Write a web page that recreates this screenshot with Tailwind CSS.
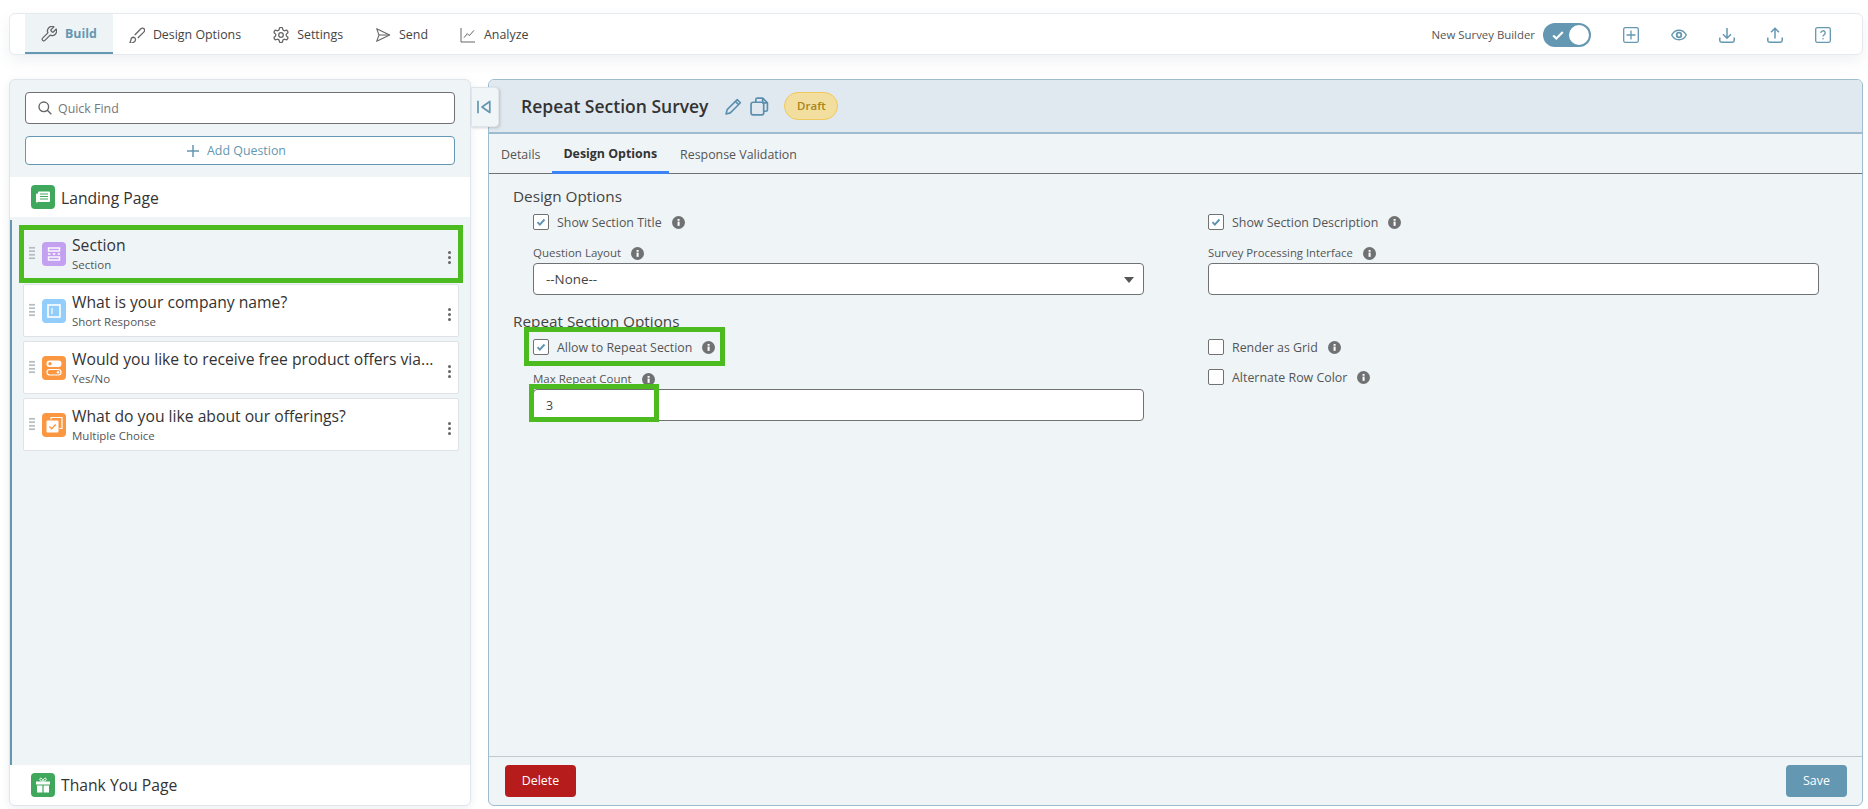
<!DOCTYPE html>
<html lang="en">
<head>
    <meta charset="UTF-8">
    <meta name="viewport" content="width=device-width, initial-scale=1.0">
    <title>Repeat Section Survey</title>
    <script src="https://cdn.jsdelivr.net/npm/@tailwindcss/browser@4"></script>
</head>
<body class="h-[809px] overflow-hidden bg-white font-['Open_Sans',sans-serif] text-[#333]">

    <!-- Shared icons -->
    <svg class="hidden">
        <symbol id="info" viewBox="0 0 14 14">
            <circle cx="7" cy="7" r="7" fill="#6f7173"/>
            <rect x="6" y="6" width="2.2" height="4.6" fill="#fff"/>
            <rect x="6" y="3.2" width="2.2" height="1.9" fill="#fff"/>
        </symbol>
        <symbol id="check" viewBox="0 0 14 14">
            <path d="M3.5 7.2l2.300 2.400L10.500 4.500" fill="none" stroke="#5c93b3" stroke-width="1.900"/>
        </symbol>
    </svg>

    <!-- Top bar -->
    <header class="mt-[13px] ml-[9px] mr-[5px] h-[42px] flex items-stretch rounded-md border border-[#e6e9ee] bg-white pl-[15px] pr-[31px] shadow-[0_6px_14px_rgba(100,116,139,0.10)]">
        <nav class="flex items-stretch text-[12.4px] text-[#444]">
            <a class="flex items-center gap-2 px-4 pt-[2px] border-b-2 border-[#6497b1] bg-[#eef3f6] font-bold text-[#6497b1]">
                <svg class="w-4 h-4" viewBox="1.500 1.500 21 21" fill="none" stroke="#666" stroke-width="1.700" stroke-linejoin="round"><path d="M14.7 6.3a1 1 0 0 0 0 1.4l1.6 1.6a1 1 0 0 0 1.4 0l3.77-3.77a6 6 0 0 1-7.94 7.94l-6.91 6.91a2.12 2.12 0 0 1-3-3l6.91-6.91a6 6 0 0 1 7.94-7.94l-3.76 3.76z"/></svg>
                Build
            </a>
            <a class="flex items-center gap-2 px-4 pt-[2px]">
                <svg class="w-4 h-4" viewBox="1.500 1.500 21 21" fill="none" stroke="#666" stroke-width="1.700" stroke-linejoin="round"><path d="m9.06 11.9 8.07-8.06a2.85 2.85 0 1 1 4.03 4.03l-8.06 8.08"/><path d="M7.07 14.94c-1.66 0-3 1.35-3 3.02 0 1.33-1 3-1.5 5 2 0 7.5-1 7.5-5a3.01 3.01 0 0 0-3-3.02z"/></svg>
                Design Options
            </a>
            <a class="flex items-center gap-2 px-4 pt-[2px]">
                <svg class="w-4 h-4" viewBox="1.500 1.500 21 21" fill="none" stroke="#666" stroke-width="1.700" stroke-linejoin="round"><path d="M12.22 2h-.44a2 2 0 0 0-2 2v.18a2 2 0 0 1-1 1.73l-.43.25a2 2 0 0 1-2 0l-.15-.08a2 2 0 0 0-2.73.73l-.22.38a2 2 0 0 0 .73 2.73l.15.1a2 2 0 0 1 1 1.72v.51a2 2 0 0 1-1 1.74l-.15.09a2 2 0 0 0-.73 2.73l.22.38a2 2 0 0 0 2.73.73l.15-.08a2 2 0 0 1 2 0l.43.25a2 2 0 0 1 1 1.73V20a2 2 0 0 0 2 2h.44a2 2 0 0 0 2-2v-.18a2 2 0 0 1 1-1.73l.43-.25a2 2 0 0 1 2 0l.15.08a2 2 0 0 0 2.73-.73l.22-.39a2 2 0 0 0-.73-2.73l-.15-.08a2 2 0 0 1-1-1.74v-.5a2 2 0 0 1 1-1.74l.15-.09a2 2 0 0 0 .73-2.73l-.22-.38a2 2 0 0 0-2.73-.73l-.15.08a2 2 0 0 1-2 0l-.43-.25a2 2 0 0 1-1-1.73V4a2 2 0 0 0-2-2z"/><circle cx="12" cy="12" r="3"/></svg>
                Settings
            </a>
            <a class="flex items-center gap-2 px-4 pt-[2px]">
                <svg class="w-4 h-4" viewBox="0 0 24 24" fill="none" stroke="#666" stroke-width="1.6" stroke-linejoin="round"><path d="M2.5 2.5 22 12 2.5 21.5 6 12z"/><path d="M6 12h16"/></svg>
                Send
            </a>
            <a class="flex items-center gap-2 px-4 pt-[2px]">
                <svg class="w-4 h-4" viewBox="0 0 24 24" fill="none" stroke="#666" stroke-width="1.5" stroke-linejoin="round"><path d="M1.5 1.5v21h21"/><path d="M6 16l5-6 3 3 7-8"/></svg>
                Analyze
            </a>
        </nav>

        <div class="ml-auto flex items-center pt-[1px]">
            <span class="text-[11.4px] text-[#555] mt-[1px]">New Survey Builder</span>
            <div class="ml-2 w-12 h-6 rounded-full bg-[#6497b1] flex items-center justify-between pl-2 pr-[2px]">
                <svg class="w-[14px] h-[14px]" viewBox="0 0 16 16" fill="none" stroke="#fff" stroke-width="2.4"><path d="M2.5 8.5l3.6 3.6L13.5 4.5"/></svg>
                <span class="w-5 h-5 rounded-full bg-white"></span>
            </div>
            <div class="ml-8 flex items-center gap-8 text-[#6497b1]">
                <svg class="w-4 h-4" viewBox="0 0 16 16" fill="none" stroke="currentColor" stroke-width="1.3"><rect x=".7" y=".7" width="14.6" height="14.6" rx="1.5"/><path d="M8 3.5v9M3.5 8h9"/></svg>
                <svg class="w-4 h-4" viewBox="0 0 16 16" fill="none" stroke="currentColor" stroke-width="1.4"><path d="M.7 8C2.3 5 5 3.2 8 3.2S13.7 5 15.3 8c-1.6 3-4.3 4.8-7.3 4.8S2.3 11 .7 8z"/><circle cx="8" cy="8" r="2.3" stroke-width="1.8"/></svg>
                <svg class="w-4 h-4" viewBox="0 0 16 16" fill="none" stroke="currentColor" stroke-width="1.5"><path d="M8 1v10M4 7.2l4 4 4-4"/><path d="M.8 10.5v3a1.7 1.7 0 0 0 1.7 1.7h11a1.7 1.7 0 0 0 1.7-1.7v-3"/></svg>
                <svg class="w-4 h-4" viewBox="0 0 16 16" fill="none" stroke="currentColor" stroke-width="1.5"><path d="M8 11.5V1.5M4 5.3l4-4 4 4"/><path d="M.8 10.5v3a1.7 1.7 0 0 0 1.7 1.7h11a1.7 1.7 0 0 0 1.7-1.7v-3"/></svg>
                <svg class="w-4 h-4" viewBox="0 0 16 16" fill="none" stroke="currentColor" stroke-width="1.3"><rect x=".7" y=".7" width="14.6" height="14.6" rx="1.5"/><path d="M5.8 6a2.2 2.2 0 1 1 3.3 1.9C8.400 8.300 8 8.800 8 9.600"/><circle cx="8" cy="11.800" r=".8" fill="currentColor" stroke="none"/></svg>
            </div>
        </div>
    </header>

    <main class="relative mt-[24px] ml-[9px] mr-[5px] h-[727px] flex gap-[17px]">
        <!-- Left: question list -->
        <aside class="w-[462px] shrink-0 flex flex-col rounded-md border border-[#dfe5ec] bg-[#eff4f7] shadow-[0_2px_8px_rgba(100,116,139,0.12)] overflow-hidden">
            <div class="px-[15px] pt-3">
                <div class="h-8 flex items-center gap-[6px] rounded border border-[#6f7173] bg-white pl-3 text-[12.4px] text-[#777]">
                    <svg class="w-[14px] h-[14px]" viewBox="0 0 14 14" fill="none" stroke="#666" stroke-width="1.4"><circle cx="5.800" cy="5.800" r="4.800"/><path d="M9.300 9.300l4 4"/></svg>
                    <span class="mt-[2px]">Quick Find</span>
                </div>
                <button class="mt-3 w-full h-[29px] flex items-center justify-center gap-2 rounded border border-[#6497b1] bg-white pr-[7px] text-[12.4px] text-[#6497b1]">
                    <svg class="w-3 h-3" viewBox="0 0 12 12" fill="none" stroke="currentColor" stroke-width="1.5"><path d="M6 0v12M0 6h12"/></svg>
                    <span class="mt-[2px]">Add Question</span>
                </button>
            </div>

            <div class="mt-3 h-10 shrink-0 flex items-center gap-[6px] bg-white pl-[21px] text-[15.700px]">
                <span class="w-6 h-6 rounded bg-[#3fa85c] flex items-center justify-center">
                    <svg class="w-[14px] h-[14px]" viewBox="0 0 14 14" fill="none"><rect x="2" y="1.500" width="12" height="10.500" rx="1" fill="#fff"/><rect x="0" y="3.500" width="2" height="9" rx=".8" fill="#fff"/><path d="M4 4h8M4 6.500h8M4 9h8" stroke="#3fa85c" stroke-width="1"/></svg>
                </span>
                <span class="mt-[3px]">Landing Page</span>
            </div>

            <div class="flex-1 mt-[3px] border-l-2 border-[#6497b1] pl-[11px] pr-[11px] pt-[7px] flex flex-col gap-1">
                <!-- Section (selected) -->
                <div class="relative h-[53px] flex items-start rounded-[2px] bg-[#eff4f7]">
                    <span class="ml-[6px] mt-[19px] w-[6px] h-[14px] bg-[radial-gradient(#b5bcc2_1.1px,transparent_1.1px)] bg-[length:3px_3.5px]"></span>
                    <span class="ml-[7px] mt-[15px] w-6 h-6 rounded bg-[#c3a1f0] flex items-center justify-center">
                        <svg class="w-4 h-4" viewBox="0 0 16 16" fill="none" stroke="#fff" stroke-width="1.400"><rect x="2.500" y="2" width="11" height="3"/><path d="M2 8h2.400M6.700 8h2.600M11.600 8H14"/><rect x="2.500" y="11" width="11" height="3"/></svg>
                    </span>
                    <div class="ml-[6px] pt-[7px]">
                        <div class="text-[15.700px] leading-[22px] whitespace-nowrap">Section</div>
                        <div class="mt-[1px] text-[11.500px] leading-4 text-[#555]">Section</div>
                    </div>
                    <div class="ml-auto mr-[8px] mt-6 flex flex-col gap-[2px]">
                        <span class="w-[3px] h-[3px] rounded-full bg-[#666]"></span><span class="w-[3px] h-[3px] rounded-full bg-[#666]"></span><span class="w-[3px] h-[3px] rounded-full bg-[#666]"></span>
                    </div>
                    <div class="absolute -left-[4px] -right-[4px] -top-[2px] -bottom-[3px] border-[5px] border-[#4cbb1f] pointer-events-none"></div>
                </div>

                <!-- Short response -->
                <div class="h-[53px] flex items-start rounded-[2px] border border-[#dfe3e8] bg-white">
                    <span class="ml-[5px] mt-[18px] w-[6px] h-[14px] bg-[radial-gradient(#b5bcc2_1.1px,transparent_1.1px)] bg-[length:3px_3.5px]"></span>
                    <span class="ml-[7px] mt-[14px] w-6 h-6 rounded bg-[#92cdfb] flex items-center justify-center">
                        <svg class="w-4 h-4" viewBox="0 0 16 16" fill="none" stroke="#fff" stroke-width="1.600"><rect x="2" y="2" width="12" height="12"/><path d="M6 5v6" stroke-width="1.200"/></svg>
                    </span>
                    <div class="ml-[6px] pt-[6px]">
                        <div class="text-[15.700px] leading-[22px] whitespace-nowrap">What is your company name?</div>
                        <div class="mt-[1px] text-[11.500px] leading-4 text-[#555]">Short Response</div>
                    </div>
                    <div class="ml-auto mr-[7px] mt-[23px] flex flex-col gap-[2px]">
                        <span class="w-[3px] h-[3px] rounded-full bg-[#666]"></span><span class="w-[3px] h-[3px] rounded-full bg-[#666]"></span><span class="w-[3px] h-[3px] rounded-full bg-[#666]"></span>
                    </div>
                </div>

                <!-- Yes/No -->
                <div class="h-[53px] flex items-start rounded-[2px] border border-[#dfe3e8] bg-white">
                    <span class="ml-[5px] mt-[18px] w-[6px] h-[14px] bg-[radial-gradient(#b5bcc2_1.1px,transparent_1.1px)] bg-[length:3px_3.5px]"></span>
                    <span class="ml-[7px] mt-[14px] w-6 h-6 rounded bg-[#fb9741] flex items-center justify-center">
                        <svg class="w-[18px] h-[18px]" viewBox="0 0 18 18" fill="none"><rect x="1.500" y="1.500" width="15" height="6.500" rx="3.200" fill="#fff"/><circle cx="5" cy="4.750" r="1.700" fill="#fb9741"/><rect x="2" y="10.500" width="14" height="5.500" rx="2.700" stroke="#fff" stroke-width="1.200"/><circle cx="13" cy="13.250" r="1.200" fill="#fff"/></svg>
                    </span>
                    <div class="ml-[6px] pt-[6px]">
                        <div class="text-[15.700px] leading-[22px] whitespace-nowrap">Would you like to receive free product offers via...</div>
                        <div class="mt-[1px] text-[11.500px] leading-4 text-[#555]">Yes/No</div>
                    </div>
                    <div class="ml-auto mr-[7px] mt-[23px] flex flex-col gap-[2px]">
                        <span class="w-[3px] h-[3px] rounded-full bg-[#666]"></span><span class="w-[3px] h-[3px] rounded-full bg-[#666]"></span><span class="w-[3px] h-[3px] rounded-full bg-[#666]"></span>
                    </div>
                </div>

                <!-- Multiple choice -->
                <div class="h-[53px] flex items-start rounded-[2px] border border-[#dfe3e8] bg-white">
                    <span class="ml-[5px] mt-[18px] w-[6px] h-[14px] bg-[radial-gradient(#b5bcc2_1.1px,transparent_1.1px)] bg-[length:3px_3.5px]"></span>
                    <span class="ml-[7px] mt-[14px] w-6 h-6 rounded bg-[#fb9741] flex items-center justify-center">
                        <svg class="w-[18px] h-[18px]" viewBox="0 0 18 18" fill="none"><path d="M6 3.500V1.500h11v11h-2.500" stroke="#fff" stroke-width="1.200"/><rect x="1.500" y="4.500" width="12" height="12" rx="1" fill="#fff"/><path d="M4.500 10.500l2.200 2.200 4-4.200" stroke="#fb9741" stroke-width="1.400"/></svg>
                    </span>
                    <div class="ml-[6px] pt-[6px]">
                        <div class="text-[15.700px] leading-[22px] whitespace-nowrap">What do you like about our offerings?</div>
                        <div class="mt-[1px] text-[11.500px] leading-4 text-[#555]">Multiple Choice</div>
                    </div>
                    <div class="ml-auto mr-[7px] mt-[23px] flex flex-col gap-[2px]">
                        <span class="w-[3px] h-[3px] rounded-full bg-[#666]"></span><span class="w-[3px] h-[3px] rounded-full bg-[#666]"></span><span class="w-[3px] h-[3px] rounded-full bg-[#666]"></span>
                    </div>
                </div>
            </div>

            <div class="h-10 shrink-0 flex items-center gap-[6px] bg-white pl-[21px] text-[15.700px]">
                <span class="w-6 h-6 rounded bg-[#3fa85c] flex items-center justify-center">
                    <svg class="w-4 h-4" viewBox="0 0 16 16" fill="#fff"><rect x="1" y="4.500" width="14" height="3"/><rect x="2" y="8.500" width="5.400" height="7"/><rect x="8.600" y="8.500" width="5.400" height="7"/><path d="M8 4.200C6 4.200 4.500 3.500 4.800 2 5.200.5 7 1 8 3.500 9 1 10.800.5 11.200 2c.3 1.500-1.200 2.200-3.200 2.200z" fill="none" stroke="#fff" stroke-width="1"/></svg>
                </span>
                <span class="mt-[2px]">Thank You Page</span>
            </div>
        </aside>

        <!-- Collapse handle -->
        <button class="absolute left-[462px] top-2 w-7 h-10 flex items-center justify-center rounded-r border border-[#dfe5ec] bg-[#f0f5f8] shadow-[1px_1px_3px_rgba(0,0,0,0.18)] z-10">
            <svg class="w-[14px] h-[14px] -ml-[2px]" viewBox="0 0 14 14" fill="none" stroke="#6497b1" stroke-width="1.700"><path d="M1 .8v12.400"/><path d="M12.800 1.500v11L5 7z" stroke-linejoin="round"/></svg>
        </button>

        <!-- Right: editor -->
        <section class="flex-1 min-w-0 flex flex-col rounded-md border border-[#9dbccf] bg-[#eff4f7] overflow-hidden">
            <div class="h-[54px] shrink-0 flex items-center border-b-2 border-[#9dbccf] bg-[#e1e9f0] pl-[32px]">
                <h1 class="text-[17.500px] font-semibold text-[#333] whitespace-nowrap">Repeat Section Survey</h1>
                <svg class="ml-[17px] w-[17px] h-[17px]" viewBox="0 0 16 16" fill="none" stroke="#5c8fae" stroke-width="1.500" stroke-linejoin="round"><path d="M11.500 1.500l3 3L5 14l-4 1 1-4z"/><path d="M9.800 3.200l3 3"/></svg>
                <svg class="ml-2 w-[19px] h-[19px]" viewBox="0 0 18 18" fill="none" stroke="#5c8fae" stroke-width="1.600" stroke-linejoin="round"><path d="M5.500 5V2.500a1.500 1.500 0 0 1 1.500-1.500h5l4.500 4.500V12a1.500 1.500 0 0 1-1.500 1.500H13"/><path d="M12 1v4.500h4.500"/><rect x="1" y="5" width="12" height="12" rx="2"/></svg>
                <span class="ml-[15px] w-[54px] h-7 flex items-center justify-center rounded-full border border-[#f1c85a] bg-[#f2dfa0] text-[11.500px] font-semibold text-[#a8841c]">Draft</span>
            </div>

            <div class="h-10 shrink-0 flex border-b border-[#6f7173] text-[12.400px] text-[#555]">
                <a class="flex items-center pt-[3px] pl-3 pr-3">Details</a>
                <a class="flex items-center pt-[3px] pl-[11px] pr-[12px] font-bold text-[#333] border-b-[3px] border-[#3b82f6] -mb-[1px]">Design Options</a>
                <a class="flex items-center pt-[3px] pl-[11px]">Response Validation</a>
            </div>

            <div class="flex-1 pl-6 pr-10 text-[12.400px] text-[#555]">
                <h2 class="mt-[11px] text-[15.300px] leading-[22px] text-[#444]">Design Options</h2>
                <div class="ml-5 grid grid-cols-[611px_611px] gap-x-[64px]">
                    <div>
                        <div class="mt-[7px] h-4 flex items-center">
                            <span class="w-4 h-4 rounded-[2px] border border-[#6f7173] bg-white"><svg class="w-full h-full"><use href="#check"/></svg></span>
                            <span class="ml-2 mt-[2px]">Show Section Title</span>
                            <svg class="ml-[10px] w-[13px] h-[13px]"><use href="#info"/></svg>
                        </div>
                        <div class="mt-[14px] h-[18px] flex items-center text-[11.500px]">
                            Question Layout
                            <svg class="ml-[10px] w-[13px] h-[13px]"><use href="#info"/></svg>
                        </div>
                        <div class="relative mt-[1px]">
                            <select class="w-full h-8 appearance-none rounded border border-[#6f7173] bg-white pl-3 text-[13.400px] text-[#444]"><option>--None--</option></select>
                            <svg class="absolute right-[10px] top-[14px] w-[10px] h-[6px]" viewBox="0 0 10 6" fill="#555"><path d="M0 0h10L5 6z"/></svg>
                        </div>
                    </div>
                    <div>
                        <div class="mt-[7px] h-4 flex items-center">
                            <span class="w-4 h-4 rounded-[2px] border border-[#6f7173] bg-white"><svg class="w-full h-full"><use href="#check"/></svg></span>
                            <span class="ml-2 mt-[2px]">Show Section Description</span>
                            <svg class="ml-[10px] w-[13px] h-[13px]"><use href="#info"/></svg>
                        </div>
                        <div class="mt-[14px] h-[18px] flex items-center text-[11.300px]">
                            Survey Processing Interface
                            <svg class="ml-[10px] w-[13px] h-[13px]"><use href="#info"/></svg>
                        </div>
                        <input class="mt-[1px] block w-full h-8 rounded border border-[#6f7173] bg-white" type="text">
                    </div>
                </div>

                <h2 class="mt-[15px] text-[15.300px] leading-[22px] text-[#444]">Repeat Section Options</h2>
                <div class="ml-5 grid grid-cols-[611px_611px] gap-x-[64px]">
                    <div>
                        <div class="relative mt-[7px] h-4 flex items-center">
                            <span class="w-4 h-4 rounded-[2px] border border-[#6f7173] bg-white"><svg class="w-full h-full"><use href="#check"/></svg></span>
                            <span class="ml-2 mt-[2px]">Allow to Repeat Section</span>
                            <svg class="ml-[10px] w-[13px] h-[13px]"><use href="#info"/></svg>
                            <div class="absolute -left-[9px] top-[-12px] w-[201px] h-[39px] border-[5px] border-[#4cbb1f] pointer-events-none"></div>
                        </div>
                        <div class="mt-[15px] h-[18px] flex items-center text-[11.500px]">
                            Max Repeat Count
                            <svg class="ml-[10px] w-[13px] h-[13px]"><use href="#info"/></svg>
                        </div>
                        <div class="relative mt-[1px]">
                            <input class="block w-full h-8 rounded border border-[#6f7173] bg-white pl-3 text-[12.400px] text-[#444]" type="text" value="3">
                            <div class="absolute -left-[4px] -top-[5px] w-[130px] h-[38px] border-[5px] border-[#4cbb1f] pointer-events-none"></div>
                        </div>
                    </div>
                    <div>
                        <div class="mt-[7px] h-4 flex items-center">
                            <span class="w-4 h-4 rounded-[2px] border border-[#6f7173] bg-white"></span>
                            <span class="ml-2 mt-[2px]">Render as Grid</span>
                            <svg class="ml-[10px] w-[13px] h-[13px]"><use href="#info"/></svg>
                        </div>
                        <div class="mt-[14px] h-4 flex items-center">
                            <span class="w-4 h-4 rounded-[2px] border border-[#6f7173] bg-white"></span>
                            <span class="ml-2 mt-[2px]">Alternate Row Color</span>
                            <svg class="ml-[10px] w-[13px] h-[13px]"><use href="#info"/></svg>
                        </div>
                    </div>
                </div>
            </div>

            <div class="h-[49px] shrink-0 flex items-start justify-between border-t border-[#bfc9d0] pl-4 pr-[15px] pt-2">
                <button class="w-[71px] h-8 rounded bg-[#b71c1c] text-[12.400px] text-white">Delete</button>
                <button class="w-[61px] h-8 rounded bg-[#6497b1] text-[12.400px] text-white">Save</button>
            </div>
        </section>
    </main>
</body>
</html>
